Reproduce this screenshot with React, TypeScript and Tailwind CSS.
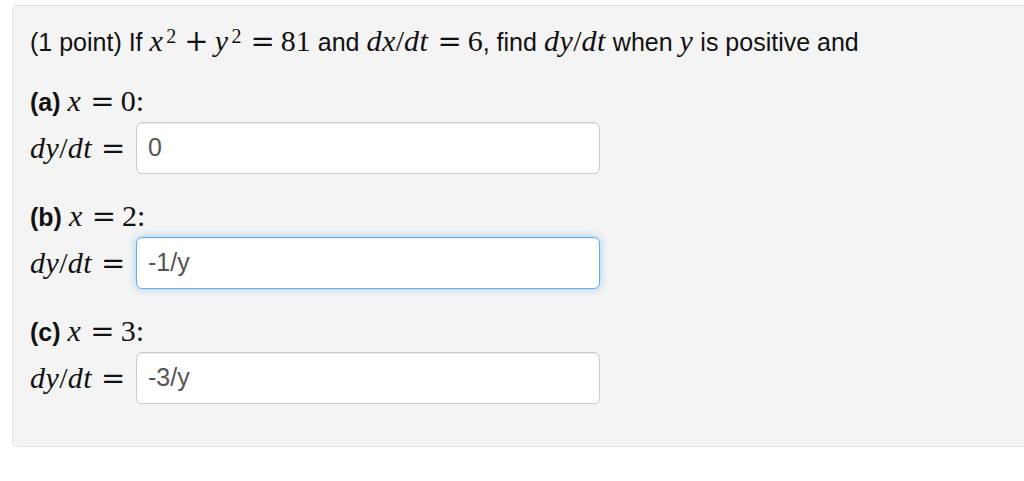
import React from 'react'

const sans = "font-['Liberation_Sans',Helvetica,Arial,sans-serif]"
const serif = "font-['Liberation_Serif','Times_New_Roman',serif]"
const opFont = "font-['DejaVu_Serif','Liberation_Serif',serif]"

function V({ children }: { children: React.ReactNode }) {
  return <span className={`${serif} italic text-[30px] tracking-[0.5px]`}>{children}</span>
}

function N({ children }: { children: React.ReactNode }) {
  return <span className={`${serif} text-[30px]`}>{children}</span>
}

function Sq() {
  return <span className={`${serif} text-[20px] relative -top-[8px] ml-[3px]`}>2</span>
}

// relations get a wider gap than binary operators, like the typeset math
function Op({ children, rel }: { children: React.ReactNode; rel?: boolean }) {
  return (
    <span className={`${opFont} text-[29px] ${rel ? 'ml-[9px] mr-[6px]' : 'ml-[8px] mr-[6px]'}`}>{children}</span>
  )
}

function DyDt() {
  return (
    <span className="whitespace-nowrap">
      <V>dy</V>
      <N>/</N>
      <V>dt</V>
    </span>
  )
}

type Part = { tag: string; x: string; value: string; focused?: boolean; mt: string }

const parts: Part[] = [
  { tag: '(a)', x: '0', value: '0', mt: 'mt-[30px]' },
  { tag: '(b)', x: '2', value: '-1/y', focused: true, mt: 'mt-[27px]' },
  { tag: '(c)', x: '3', value: '-3/y', mt: 'mt-[27px]' },
]

function AnswerRow({ p }: { p: Part }) {
  return (
    <div className={p.mt}>
      <div className="leading-[30px] h-[30px] whitespace-nowrap">
        <span className="font-bold">{p.tag}</span>{' '}
        <V>x</V>
        <Op rel>=</Op>
        <N>{p.x}</N>
        <N>:</N>
      </div>
      <div className="mt-[6px] flex items-center h-[52px]">
        <div className="w-[106px] leading-[30px] whitespace-nowrap">
          <DyDt />
          <Op rel>=</Op>
        </div>
        <div
          className={
            'w-[464px] h-[52px] rounded-[6px] bg-white border flex items-center px-[11px] text-[25px] text-[#555] ' +
            (p.focused
              ? 'border-[#66afe9] shadow-[inset_0_1px_1px_rgba(0,0,0,0.075),0_0_8px_rgba(102,175,233,0.6)]'
              : 'border-[#cccccc] shadow-[inset_0_1px_1px_rgba(0,0,0,0.075)]')
          }
        >
          {p.value}
        </div>
      </div>
    </div>
  )
}

export default function App() {
  return (
    <div className={`w-[1024px] h-[481px] overflow-hidden bg-white ${sans} text-[25px] text-[#111]`}>
      <div className="ml-[12px] mt-[5px] w-[1030px] h-[442px] bg-[#f4f4f4] border border-[#e1e1e1] rounded-[5px] pl-[17px] pt-[20px]">
        <p className="leading-[30px] h-[30px] whitespace-nowrap">
          (1 point) If <V>x</V>
          <Sq />
          <Op>+</Op>
          <V>y</V>
          <Sq />
          <Op rel>=</Op>
          <N>81</N> and <V>dx</V>
          <N>/</N>
          <V>dt</V>
          <Op rel>=</Op>
          <N>6</N>, find <DyDt /> when <V>y</V> is positive and
        </p>
        {parts.map(p => (
          <AnswerRow key={p.tag} p={p} />
        ))}
      </div>
    </div>
  )
}
